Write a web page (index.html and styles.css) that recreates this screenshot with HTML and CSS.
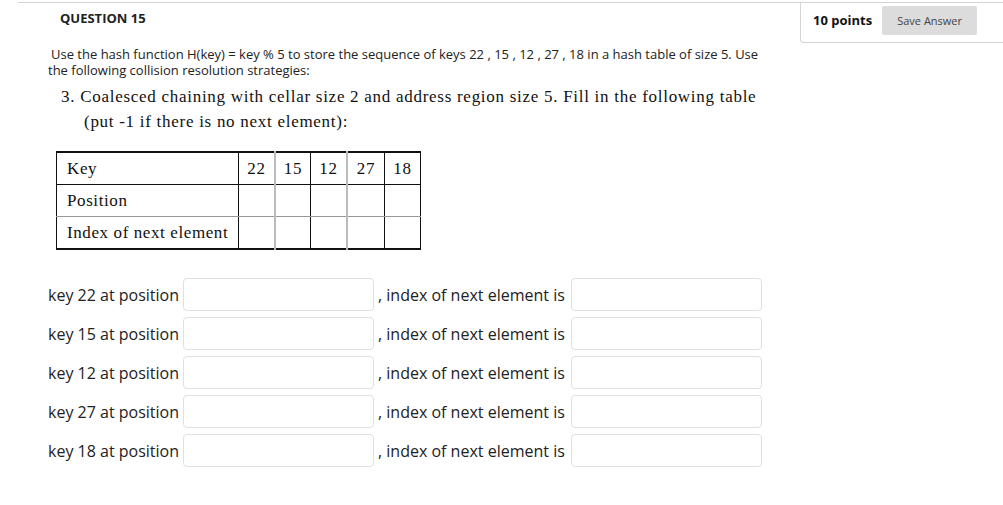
FILE: index.html
```html
<!DOCTYPE html>
<html>
<head>
<meta charset="utf-8">
<link rel="stylesheet" href="styles.css">
</head>
<body>
<div class="wrap">
  <div class="header">
    <div class="title">QUESTION 15</div>
    <div class="panel">
      <span class="points">10 points</span>
      <button class="save">Save Answer</button>
    </div>
  </div>
  <div class="body">
    <p class="intro">Use the hash function H(key) = key % 5 to store the sequence of keys 22 , 15 , 12 , 27 , 18 in a hash table of size 5. Use the following collision resolution strategies:</p>
    <p class="latex">3. Coalesced chaining with cellar size 2 and address region size 5. Fill in the following table (put -1 if there is no next element):</p>
    <table class="tbl">
      <tr class="r1"><td class="lab">Key</td><td class="c1">22</td><td class="c2">15</td><td class="c3">12</td><td class="c4">27</td><td class="c5">18</td></tr>
      <tr class="r2"><td class="lab">Position</td><td class="c1"></td><td class="c2"></td><td class="c3"></td><td class="c4"></td><td class="c5"></td></tr>
      <tr class="r3"><td class="lab">Index of next element</td><td class="c1"></td><td class="c2"></td><td class="c3"></td><td class="c4"></td><td class="c5"></td></tr>
    </table>
    <div class="form">
      <div class="row"><span class="t1">key 22 at position</span><input class="inp" type="text"><span class="t2">, index of next element is</span><input class="inp" type="text"></div>
      <div class="row"><span class="t1">key 15 at position</span><input class="inp" type="text"><span class="t2">, index of next element is</span><input class="inp" type="text"></div>
      <div class="row"><span class="t1">key 12 at position</span><input class="inp" type="text"><span class="t2">, index of next element is</span><input class="inp" type="text"></div>
      <div class="row"><span class="t1">key 27 at position</span><input class="inp" type="text"><span class="t2">, index of next element is</span><input class="inp" type="text"></div>
      <div class="row"><span class="t1">key 18 at position</span><input class="inp" type="text"><span class="t2">, index of next element is</span><input class="inp" type="text"></div>
    </div>
  </div>
</div>
</body>
</html>
```

FILE: styles.css
```css
html, body { margin: 0; padding: 0; background: #fff; }
body { font-family: "Open Sans", "Liberation Sans", sans-serif; color: #222; }
.wrap { margin-left: 18px; margin-top: 2px; border-top: 1px solid #d4d4d4; }
.header { display: flex; justify-content: space-between; align-items: flex-start; }
.title { padding-left: 42px; padding-top: 6px; font-size: 13px; line-height: 18px; font-weight: 700; color: #222; }
.panel { width: 190px; height: 39px; box-sizing: content-box; border-left: 1px solid #d4d4d4; border-bottom: 1px solid #d4d4d4; border-bottom-left-radius: 4px; display: flex; align-items: flex-start; padding-left: 12px; padding-top: 0; }
.points { font-size: 13px; font-weight: 700; line-height: 18px; margin-top: 8px; color: #111; }
.save { margin-left: 10px; margin-top: 3px; width: 95px; height: 29px; border: none; border-radius: 2px; background: #dcdcdc; font-family: "Open Sans", "Liberation Sans", sans-serif; font-size: 11px; color: #444; padding: 0; }
.body { padding-left: 30px; }
.intro { margin: 3px 0 0 0; font-size: 13px; line-height: 16px; text-indent: 3px; width: 716px; color: #222; }
.latex { margin: 6px 0 0 13px; font-family: "Liberation Serif", "DejaVu Serif", serif; font-size: 17px; letter-spacing: 0.72px; line-height: 25px; padding-left: 23px; text-indent: -23px; width: 705px; color: #111; }
.tbl { margin: 17px 0 0 8px; border-collapse: collapse; font-family: "Liberation Serif", "DejaVu Serif", serif; font-size: 17px; letter-spacing: 0.7px; color: #111; border-top: 2px solid #111; border-bottom: 2px solid #111; border-left: 1px solid #111; border-right: 1px solid #111; }
.tbl td { padding: 0; height: 31px; border-right: 1px solid #111; text-align: center; }
.tbl .lab { width: 171px; text-align: left; padding-left: 10px; letter-spacing: 0.6px; }
.tbl .r1 td { border-bottom: 1px solid #111; }
.tbl .r2 td { border-bottom: 1px solid #999; }
.tbl .c1 { width: 35px; border-right: 2px solid #bbb; }
.tbl .c2 { width: 34px; }
.tbl .c3 { width: 35px; border-right: 2px solid #bbb; }
.tbl .c4 { width: 36px; }
.tbl .c5 { width: 35px; }
.form { margin-top: 28px; display: flex; flex-direction: column; gap: 6px; }
.row { display: flex; align-items: center; font-size: 16px; color: #222; }
.t1 { width: 135px; }
.t2 { margin-left: 4px; width: 193px; }
.inp { width: 191px; height: 33px; box-sizing: border-box; border: 1px solid #e0e0e0; border-radius: 4px; margin: 0; padding: 0; background: #fff; }
```
